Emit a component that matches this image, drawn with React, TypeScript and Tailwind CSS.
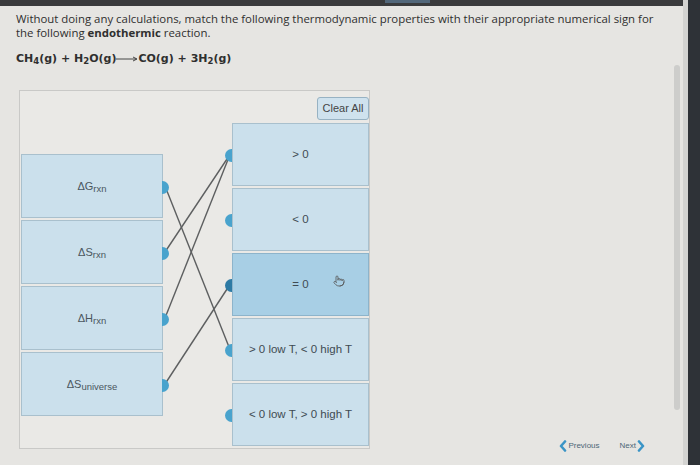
import React from 'react';
import { Pointer } from 'lucide-react';

type Item = { main: string; sub?: string };

const leftItems: Item[] = [
  { main: 'ΔG', sub: 'rxn' },
  { main: 'ΔS', sub: 'rxn' },
  { main: 'ΔH', sub: 'rxn' },
  { main: 'ΔS', sub: 'universe' },
];

const rightItems = ['> 0', '< 0', '= 0', '> 0 low T, < 0 high T', '< 0 low T, > 0 high T'];

// line endpoints in panel padding-box coordinates
const links = [
  [145, 95, 210, 258.5],
  [145, 161, 210, 63.5],
  [145, 227, 210, 63.5],
  [145, 293, 210, 193.5],
];

const Chevron = ({ dir }: { dir: 'left' | 'right' }) => (
  <svg width="8" height="12" viewBox="0 0 8 12">
    <path
      d={dir === 'left' ? 'M6 1.5 L2 6 L6 10.5' : 'M2 1.5 L6 6 L2 10.5'}
      fill="none"
      stroke="#3a94c6"
      strokeWidth="2.6"
      strokeLinecap="round"
      strokeLinejoin="round"
    />
  </svg>
);

const cardFont = { fontFamily: '"Liberation Sans", Arial, sans-serif' };

const MatchPanel = () => (
  <div className="relative flex h-[359px] w-[351px] border border-[#c9c9c7] bg-[#eae9e6] pl-[1px]" style={cardFont}>
    <svg className="absolute inset-0" width="349" height="357">
      {links.map(([x1, y1, x2, y2], i) => (
        <line key={i} x1={x1} y1={y1} x2={x2} y2={y2} stroke="#5d5f60" strokeWidth="1.4" />
      ))}
    </svg>

    {/* left column */}
    <div className="mt-[63px] flex w-[142px] flex-col gap-[2px]">
      {leftItems.map((it, i) => (
        <div
          key={i}
          className="relative flex h-[64px] items-center justify-center border border-[#a9c0cd] bg-[#cbe0ec] text-[11px] text-[#4a565e]"
        >
          <span>
            {it.main}
            <sub className="text-[9.5px]">{it.sub}</sub>
          </span>
          <span className="absolute right-[-7px] top-[26px] h-[13px] w-[7px] rounded-r-full bg-[#49a3cd]" />
        </div>
      ))}
    </div>

    {/* right column */}
    <div className="ml-auto flex w-[137px] flex-col">
      <button className="mt-[6px] h-[23px] w-[52px] self-end rounded-[3px] border border-[#97b2c3] bg-[#cfe2ee] text-[11px] text-[#444]">
        Clear All
      </button>
      <div className="mt-[3px] flex flex-col gap-[2px]">
        {rightItems.map((t, i) => {
          const sel = i === 2;
          return (
            <div
              key={i}
              className={`relative flex h-[63px] items-center justify-center border text-[11.5px] text-[#3f4b53] ${
                sel ? 'border-[#8db4cb] bg-[#a8cfe5]' : 'border-[#a9c0cd] bg-[#cbe0ec]'
              }`}
            >
              {t}
              <span
                className={`absolute left-[-8px] top-[25px] h-[13px] w-[7px] rounded-l-full ${
                  sel ? 'bg-[#2d7aa4]' : 'bg-[#49a3cd]'
                }`}
              />
              {sel && (
                <Pointer className="absolute left-[100px] top-[21px] text-[#555]" size={12} strokeWidth={1.6} />
              )}
            </div>
          );
        })}
      </div>
    </div>
  </div>
);

export default function App() {
  return (
    <div className="flex h-[465px] w-[700px] overflow-hidden bg-[#2e3237]" style={{ fontFamily: '"Open Sans", sans-serif' }}>
      <div className="flex w-[683px] flex-col">
        <div className="flex h-[6px] bg-[#3a3b3d]">
          <div className="ml-[385px] h-[3px] w-[45px] bg-[#52677a]" />
        </div>
        <div className="flex flex-1 bg-[#e6e5e2]">
          <div className="flex flex-1 flex-col pl-[16px] pt-[6px] text-[#2f2f2f]">
            <p className="text-[11.4px] leading-[14px]">
              Without doing any calculations, match the following thermodynamic properties with their appropriate numerical sign for
              <br />
              the following <b>endothermic</b> reaction.
            </p>
            <p
              className="mt-[12px] flex items-center text-[11px] font-bold leading-[13px]"
              style={{ fontFamily: '"DejaVu Sans", sans-serif' }}
            >
              CH<sub className="text-[8.5px]">4</sub>(g) + H<sub className="text-[8.5px]">2</sub>O(g)
              <svg width="22" height="6" viewBox="0 0 22 6">
                <line x1="0" y1="3" x2="20" y2="3" stroke="#333" strokeWidth="0.9" />
                <path d="M17 1 L21 3 L17 5" fill="none" stroke="#333" strokeWidth="0.9" />
              </svg>
              CO(g) + 3H<sub className="text-[8.5px]">2</sub>(g)
            </p>
            <div className="mt-[25px] flex items-end pl-[3px]">
              <MatchPanel />
              <div
                className="mb-[-3px] ml-auto mr-[25px] flex items-center gap-[20px] text-[8px] text-[#4d6576]"
                style={{ fontFamily: '"Liberation Sans", sans-serif' }}
              >
                <span className="flex items-center gap-[1px]">
                  <Chevron dir="left" />
                  Previous
                </span>
                <span className="flex items-center gap-[1px]">
                  Next
                  <Chevron dir="right" />
                </span>
              </div>
            </div>
          </div>
          <div className="flex w-[13px] justify-center pt-[59px]">
            <div className="h-[345px] w-[6px] rounded-[3px] bg-[#cdcdcb]" />
          </div>
        </div>
      </div>
      <div className="w-[5px] bg-[#d3d3d1]" />
      <div className="flex-1 bg-[#2e3237]" />
    </div>
  );
}
